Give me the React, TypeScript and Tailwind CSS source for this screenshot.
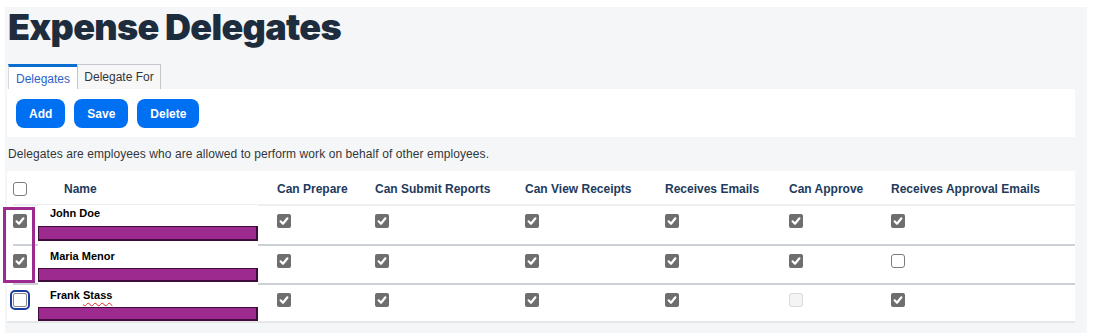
type Mark = 'on' | 'off' | 'disabled';

interface Delegate {
    name: string;
    selected: boolean;
    focused?: boolean;
    misspelled?: string;
    rights: Mark[];
}

const columns = ['Can Prepare', 'Can Submit Reports', 'Can View Receipts', 'Receives Emails', 'Can Approve', 'Receives Approval Emails'];

const delegates: Delegate[] = [
    { name: 'John Doe', selected: true, rights: ['on', 'on', 'on', 'on', 'on', 'on'] },
    { name: 'Maria Menor', selected: true, rights: ['on', 'on', 'on', 'on', 'on', 'off'] },
    { name: 'Frank', misspelled: 'Stass', selected: false, focused: true, rights: ['on', 'on', 'on', 'on', 'disabled', 'on'] },
];

function Check({ mark, focused }: { mark: Mark; focused?: boolean }) {
    if (mark === 'on') {
        return (
            <span className="flex h-[14px] w-[14px] items-center justify-center rounded-[2px] bg-[#6e6e6e]">
                <svg viewBox="0 0 14 14" className="h-[14px] w-[14px]">
                    <path d="M3.6 7.3 L6 9.7 L10.4 4.3" fill="none" stroke="white" strokeWidth="2.2" strokeLinecap="round" strokeLinejoin="round" />
                </svg>
            </span>
        );
    }
    if (mark === 'disabled') {
        return <span className="block h-[14px] w-[14px] rounded-[3px] border border-[#d9d9d9] bg-[#f4f4f4]" />;
    }
    return (
        <span
            className={
                focused
                    ? 'block h-[14px] w-[14px] rounded-[2px] border border-[#8a8a8a] bg-white outline-2 outline-offset-[1px] outline-[#1b3d9e]'
                    : 'block h-[14px] w-[14px] rounded-[3px] border border-[#7c7c7c] bg-white'
            }
        />
    );
}

const gridCols = 'grid grid-cols-[51px_213px_98px_150px_140px_124px_102px_1fr]';

export default function App() {
    return (
        <div className="min-h-screen bg-white pl-[5px] pt-[7px]" style={{ fontFamily: '"Liberation Sans", Arial, sans-serif' }}>
            <div className="h-[326px] w-[1082px] bg-[#f5f6f7] pl-[2px]">
                <div className="w-[1068px]">
                    <h1
                        className="h-[57px] pl-[1px] pt-[1px] text-[36px] font-black leading-[38px] tracking-[-0.7px] text-[#1d2d3e]"
                        style={{ fontFamily: 'Inter, sans-serif' }}
                    >
                        Expense Delegates
                    </h1>

                    {/* tabs */}
                    <div className="flex h-[25px] pl-[1px] text-[12px]">
                        <div className="flex w-[69px] items-center justify-center border-t-[3px] border-l border-[#0a6ed1] border-l-[#d5d9de] bg-white pt-[1px] text-[#2b62c6]">
                            Delegates
                        </div>
                        <div className="flex w-[84px] items-center justify-center border border-b-0 border-[#c2c7cd] bg-[#f7f7f8] text-[#32363a]">
                            Delegate For
                        </div>
                    </div>

                    {/* toolbar */}
                    <div className="flex h-[48px] gap-[9px] bg-white pl-[9px] pt-[10px]">
                        {['Add', 'Save', 'Delete'].map((label) => (
                            <button
                                key={label}
                                className="h-[29px] rounded-[8px] bg-[#0070f2] px-[13px] text-[12px] font-bold text-white"
                            >
                                {label}
                            </button>
                        ))}
                    </div>

                    <p className="flex h-[34px] items-center pl-[1px] text-[12px] tracking-[0.08px] text-[#32363a]">
                        Delegates are employees who are allowed to perform work on behalf of other employees.
                    </p>

                    {/* table */}
                    <div className="relative border-b-2 border-[#e6e7e9] bg-white pl-[6px]">
                        <div className={`${gridCols} h-[35px] items-center border-b-2 border-[#eceef0] pt-[3px] text-[12px] font-bold text-[#223a5c]`}>
                            <Check mark="off" />
                            <span>Name</span>
                            {columns.map((c) => (
                                <span key={c}>{c}</span>
                            ))}
                        </div>
                        {delegates.map((d, i) => (
                            <div
                                key={d.name}
                                className={`${gridCols} items-start pt-[8px] ${i === 0 ? 'h-[40px]' : i === 1 ? 'h-[39px]' : 'h-[36px]'} ${i < 2 ? 'border-b-2 border-[#cdd1d7]' : ''}`}
                            >
                                <Check mark={d.selected ? 'on' : 'off'} focused={d.focused} />
                                <span />
                                {d.rights.map((r, j) => (
                                    <Check key={j} mark={r} />
                                ))}
                            </div>
                        ))}

                        {/* names with redaction bars */}
                        <div className="absolute left-[31px] top-[34px] h-[116px] w-[220px] bg-white">
                            {delegates.map((d, i) => (
                                <div key={d.name} className={i === 1 ? 'pt-[7px]' : i === 2 ? 'pt-[5px]' : ''}>
                                    <div className="h-[16px] pl-[12px] text-[11px] font-bold leading-[16px] text-black">
                                        {d.name}
                                        {d.misspelled && (
                                            <>
                                                {' '}
                                                <span className="underline decoration-[#e0272b] decoration-wavy decoration-1 underline-offset-[3px]">
                                                    {d.misspelled}
                                                </span>
                                            </>
                                        )}
                                    </div>
                                    <div
                                        className={`${i === 0 ? 'mt-[5px] h-[15px]' : 'mt-[4px] h-[14px]'} border border-r-2 border-b-2 border-[#3e0b3a] bg-[#9d2a8f]`}
                                    />
                                </div>
                            ))}
                        </div>

                        {/* highlight frame */}
                        <div className="absolute left-[-4px] top-[36px] h-[76px] w-[32px] border-[3px] border-[#9d2a8f]" />
                    </div>
                </div>
            </div>
        </div>
    );
}
